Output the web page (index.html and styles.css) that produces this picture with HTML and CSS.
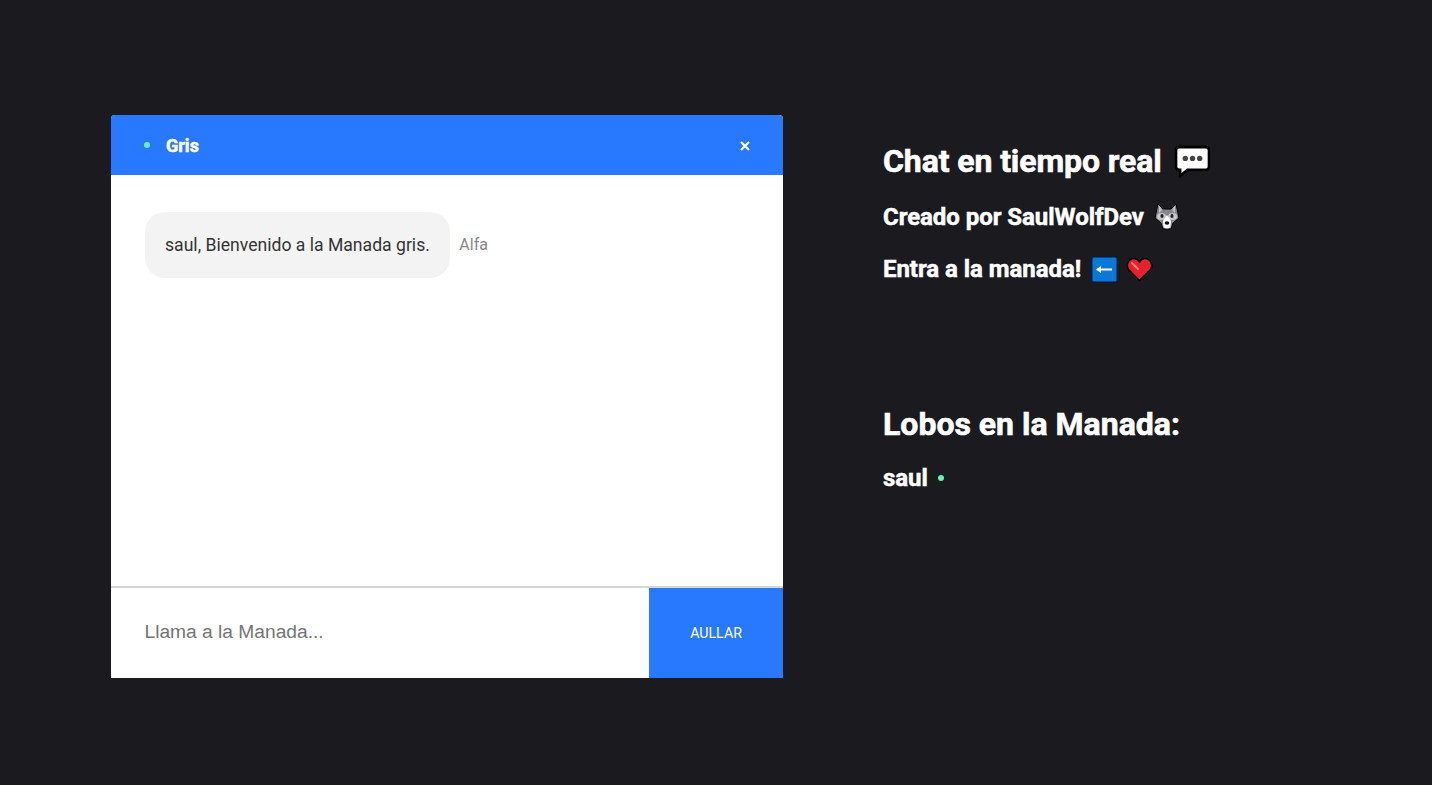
FILE: index.html
```html
<!DOCTYPE html>
<html lang="en">
<head>
  <meta charset="UTF-8" />
  <title>Chat en tiempo real</title>
  <link rel="stylesheet" href="styles.css">
</head>
<body>

<div class="page">

  <div class="chat">
    <div class="chat-header">
      <span class="dot"></span>
      <span class="room">Gris</span>
      <svg class="close" width="10" height="10" viewBox="0 0 10 10">
        <path d="M1 1L9 9M9 1L1 9" stroke="#fff" stroke-width="2.2"/>
      </svg>
    </div>

    <div class="messages">
      <div class="message">
        <div class="bubble">saul, Bienvenido a la Manada gris.</div>
        <span class="author">Alfa</span>
      </div>
    </div>

    <form class="send-form">
      <input class="send-input" type="text" placeholder="Llama a la Manada...">
      <button class="send-btn" type="button">AULLAR</button>
    </form>
  </div>

  <div class="info">
    <h1>Chat en tiempo real
      <svg class="emoji-chat" width="37" height="33" viewBox="0 0 36 32">
        <path d="M5 2H31Q34 2 34 5V21Q34 24 31 24H13L6 30V24H5Q2 24 2 21V5Q2 2 5 2Z" fill="#fff" stroke="#000" stroke-width="2.5"/>
        <circle cx="11" cy="13" r="2.6" fill="#444"/>
        <circle cx="18" cy="13" r="2.6" fill="#444"/>
        <circle cx="25" cy="13" r="2.6" fill="#444"/>
      </svg>
    </h1>
    <h2>Creado por SaulWolfDev
      <svg class="emoji-wolf" width="26" height="28" viewBox="0 0 26 28">
        <path d="M4 1L9 6H17L22 1L25 15L19 20L17 26H9L7 20L1 15Z" fill="#85858a" stroke="#000" stroke-width="1"/>
        <path d="M5 3L8 7L5 10ZM21 3L18 7L21 10Z" fill="#c4c4c6"/>
        <ellipse cx="7.500" cy="13.500" rx="4.500" ry="3.500" fill="#c9c9cc"/>
        <ellipse cx="18.500" cy="13.500" rx="4.500" ry="3.500" fill="#c9c9cc"/>
        <ellipse cx="8" cy="13" rx="1.600" ry="2" fill="#222"/>
        <ellipse cx="18" cy="13" rx="1.600" ry="2" fill="#222"/>
        <path d="M13 12L17 18L16.500 24Q13 27 9.500 24L9 18Z" fill="#fff"/>
        <ellipse cx="13" cy="20" rx="2.400" ry="1.800" fill="#111"/>
      </svg>
    </h2>
    <h2 class="join">Entra a la manada!
      <svg class="emoji-arrow" width="27" height="27" viewBox="0 0 27 27">
        <rect x="0.750" y="0.750" width="25.500" height="25.500" rx="2" fill="#0a78d6" stroke="#0b1a33" stroke-width="1.500"/>
        <path d="M5 13.500L10 10V12.500H21V14.500H10V17Z" fill="#fff"/>
      </svg>
      <svg class="emoji-heart" width="27" height="25" viewBox="0 0 27 25">
        <path d="M13.500 23.500L3 13Q0 9.500 2 5.500Q4 1.500 8 1.500Q11.500 1.500 13.500 5Q15.500 1.500 19 1.500Q23 1.500 25 5.500Q27 9.500 24 13Z" fill="#e8202e" stroke="#000" stroke-width="1.600"/>
        <path d="M6 6L12 12" stroke="#ff7a70" stroke-width="2.200" stroke-linecap="round"/>
      </svg>
    </h2>

    <h1 class="wolves-title">Lobos en la Manada:</h1>
    <h2 class="wolf">saul <span class="dot"></span></h2>
  </div>

</div>

</body>
</html>
```

FILE: styles.css
```css
body {
  font-family: Roboto, sans-serif;
  background-color: #1a1a1f;
  margin: 0;
  padding: 0;
  height: 785px;
  overflow: hidden;
}

.page {
  display: flex;
  gap: 100px;
  padding: 115px 0 0 111px;
}

.chat {
  width: 672px;
  height: 563px;
  display: flex;
  flex-direction: column;
  background: white;
  border-radius: 4px 4px 0 0;
  overflow: hidden;
}

.chat-header {
  display: flex;
  align-items: center;
  height: 60px;
  padding: 0 33px;
  background-color: #2979ff;
  color: white;
}

.dot {
  display: inline-block;
  width: 6px;
  height: 6px;
  border-radius: 50%;
  background-color: #69f0ae;
}

.room {
  margin-left: 16px;
  font-size: 18px;
  font-weight: 700;
  flex: 1;
  -webkit-text-stroke: 0.5px white;
}

.close {
  margin-top: 2px;
}

.messages {
  flex: 1;
  padding: 37px 34px;
  border-bottom: 2px solid #d6d6d6;
}

.message {
  display: flex;
  align-items: flex-start;
}

.bubble {
  padding: 22px 20px;
  background-color: #f3f3f3;
  border-radius: 20px;
  color: #333;
  font-size: 17.6px;
  line-height: 22px;
}

.author {
  margin-left: 9.5px;
  margin-top: 23px;
  color: #888;
  font-size: 16px;
}

.send-form {
  display: flex;
  height: 90px;
  margin: 0;
}

.send-input {
  flex: 1;
  min-width: 0;
  border: none;
  padding: 0 33.5px 2px;
  font-family: "Liberation Sans", sans-serif;
  font-size: 19.2px;
  outline: none;
}

.send-btn {
  width: 134px;
  border: none;
  background-color: #2979ff;
  color: white;
  font-family: Roboto, sans-serif;
  font-size: 14.2px;
  cursor: pointer;
}

.info {
  color: white;
  padding-top: 26px;
}

.info h1 {
  display: flex;
  align-items: center;
  gap: 12px;
  margin: 0;
  font-size: 32px;
  line-height: 40px;
  letter-spacing: -0.1px;
  -webkit-text-stroke: 0.6px white;
}

.info h2 {
  display: flex;
  align-items: center;
  gap: 10px;
  margin: 20px 0 0;
  font-size: 24px;
  line-height: 32px;
  letter-spacing: -0.05px;
  -webkit-text-stroke: 0.5px white;
}

.info .join {
  gap: 8px;
}

.info .emoji-arrow {
  margin-left: 2px;
}

.info .wolves-title {
  margin-top: 119px;
  letter-spacing: 0;
}

.info .wolf {
  margin-top: 18px;
}
```
